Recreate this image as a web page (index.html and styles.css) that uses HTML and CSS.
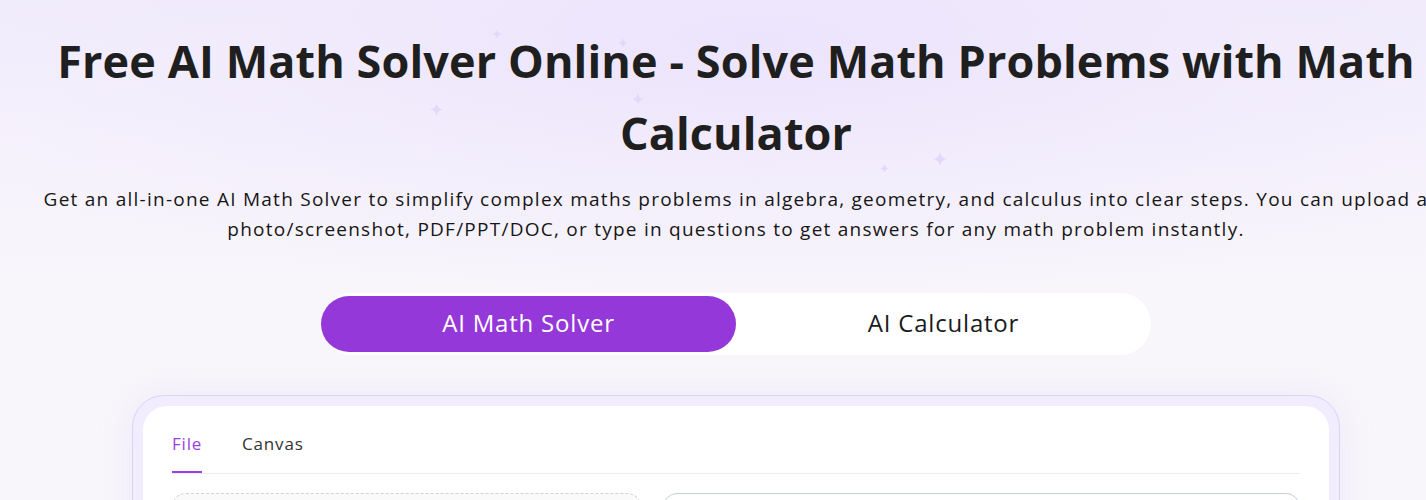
FILE: index.html
```html
<!DOCTYPE html>
<html lang="en">
<head>
<meta charset="utf-8">
<title>Free AI Math Solver Online</title>
<link rel="stylesheet" href="styles.css">
</head>
<body>
<div class="page">
  <div class="stars" aria-hidden="true">
    <svg class="star s1" viewBox="0 0 10 10"><path d="M5 0 Q5.6 4.4 10 5 Q5.6 5.6 5 10 Q4.4 5.6 0 5 Q4.4 4.4 5 0Z"/></svg>
    <svg class="star s2" viewBox="0 0 10 10"><path d="M5 0 Q5.6 4.4 10 5 Q5.6 5.6 5 10 Q4.4 5.6 0 5 Q4.4 4.4 5 0Z"/></svg>
    <svg class="star s3" viewBox="0 0 10 10"><path d="M5 0 Q5.6 4.4 10 5 Q5.6 5.6 5 10 Q4.4 5.6 0 5 Q4.4 4.4 5 0Z"/></svg>
    <svg class="star s4" viewBox="0 0 10 10"><path d="M5 0 Q5.6 4.4 10 5 Q5.6 5.6 5 10 Q4.4 5.6 0 5 Q4.4 4.4 5 0Z"/></svg>
    <svg class="star s5" viewBox="0 0 10 10"><path d="M5 0 Q5.6 4.4 10 5 Q5.6 5.6 5 10 Q4.4 5.6 0 5 Q4.4 4.4 5 0Z"/></svg>
    <svg class="star s6" viewBox="0 0 10 10"><path d="M5 0 Q5.6 4.4 10 5 Q5.6 5.6 5 10 Q4.4 5.6 0 5 Q4.4 4.4 5 0Z"/></svg>
  </div>
  <section class="hero">
    <h1 class="title">Free AI Math Solver Online - Solve Math Problems with Math Calculator</h1>
    <p class="subtitle">Get an all-in-one AI Math Solver to simplify complex maths problems in algebra, geometry, and calculus into clear steps. You can upload a photo/screenshot, PDF/PPT/DOC, or type in questions to get answers for any math problem instantly.</p>
    <div class="switch">
      <button class="switch-btn active">AI Math Solver</button>
      <button class="switch-btn">AI Calculator</button>
    </div>
    <div class="card-frame">
      <div class="card">
        <div class="tabs">
          <span class="tab active">File</span>
          <span class="tab">Canvas</span>
        </div>
        <div class="panes">
          <div class="drop"></div>
          <div class="input"></div>
        </div>
      </div>
    </div>
  </section>
</div>
</body>
</html>
```

FILE: styles.css
```css
html, body {
  margin: 0;
  padding: 0;
}
body {
  background: #f8f6fb;
  overflow: hidden;
  font-family: "Open Sans", "Liberation Sans", sans-serif;
  color: #1f1f1f;
}
.page {
  position: relative;
  width: 1472px;
  height: 500px;
  background:
    radial-gradient(ellipse 900px 260px at 760px 40px, #ece4fc 0%, rgba(240,234,252,0.6) 55%, rgba(248,246,251,0) 100%),
    linear-gradient(180deg, #f1ecfc 0%, #f6f2fc 160px, #f8f6fb 280px, #f8f6fb 100%);
}
.stars {
  position: absolute;
  inset: 0;
  pointer-events: none;
}
.star {
  position: absolute;
  fill: #e2d8fb;
}
.s1 { left: 492px; top: 29px; width: 10px; height: 10px; }
.s2 { left: 618px; top: 38px; width: 10px; height: 10px; }
.s3 { left: 430px; top: 103px; width: 13px; height: 13px; }
.s4 { left: 632px; top: 93px; width: 12px; height: 12px; }
.s5 { left: 880px; top: 164px; width: 9px; height: 9px; }
.s6 { left: 933px; top: 152px; width: 14px; height: 14px; }
.hero {
  position: relative;
  display: flex;
  flex-direction: column;
  align-items: center;
  padding-top: 25px;
}
.title {
  margin: 0;
  width: 1420px;
  text-align: center;
  font-size: 45px;
  line-height: 72px;
  font-weight: 700;
  letter-spacing: 0.1px;
  color: #1f1f1f;
}
.subtitle {
  margin: 15px 0 0;
  width: 1400px;
  text-align: center;
  font-size: 19px;
  line-height: 30px;
  letter-spacing: 1.25px;
  color: #161616;
}
.switch {
  margin-top: 49px;
  display: flex;
  width: 830px;
  height: 62px;
  padding: 3px 0;
  box-sizing: border-box;
  background: #ffffff;
  border-radius: 31px;
}
.switch-btn {
  flex: 1;
  border: 0;
  background: transparent;
  border-radius: 28px;
  font-family: inherit;
  font-size: 24px;
  letter-spacing: 0.8px;
  color: #1b1b1b;
  padding: 0 0 3px;
}
.switch-btn.active {
  background: #9538d9;
  color: #ffffff;
}
.card-frame {
  margin-top: 40px;
  width: 1208px;
  box-sizing: border-box;
  padding: 10px;
  background: #f1edfe;
  border: 1px solid #ddd2fb;
  border-radius: 32px;
  box-shadow: 0 0 30px rgba(220, 210, 240, 0.35);
}
.card {
  background: #ffffff;
  border-radius: 24px;
  padding: 0 29px 40px;
  height: 200px;
}
.tabs {
  display: flex;
  gap: 40px;
  border-bottom: 1px solid #ececef;
  padding-top: 26px;
}
.tab {
  font-size: 17px;
  line-height: 24px;
  letter-spacing: 0.8px;
  padding-bottom: 17px;
  color: #333333;
}
.tab.active {
  color: #9b3fe2;
  box-shadow: inset 0 -2px 0 #9b3fe2;
}
.panes {
  display: flex;
  gap: 22px;
  margin-top: 19px;
}
.drop {
  width: 469px;
  height: 200px;
  box-sizing: border-box;
  border: 1px dashed #d2d2d6;
  border-radius: 14px;
  background: #fafafa;
}
.input {
  flex: 1;
  height: 200px;
  box-sizing: border-box;
  border: 1px solid #c8cfdc;
  border-radius: 14px;
  background: #ffffff;
}
```
